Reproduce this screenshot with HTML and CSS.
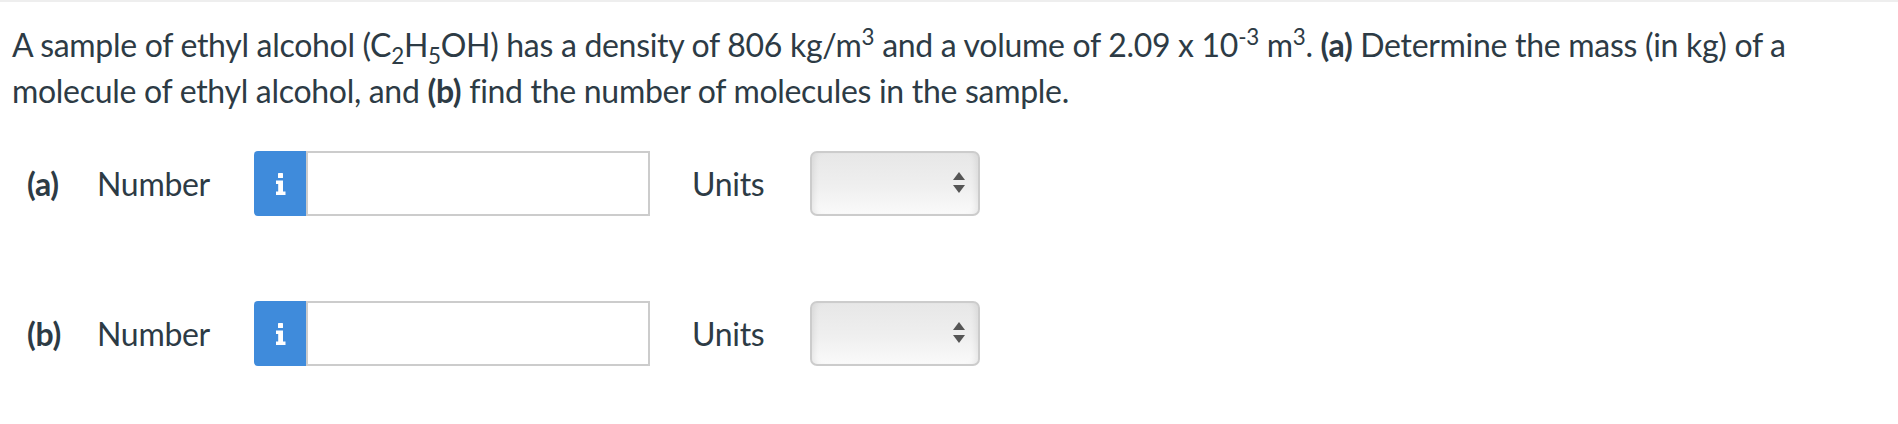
FILE: index.html
```html
<!DOCTYPE html>
<html>
<head>
<meta charset="utf-8">
<link rel="stylesheet" href="styles.css">
</head>
<body>
<div class="page">
  <p class="question">A sample of ethyl alcohol (C<sub>2</sub>H<sub>5</sub>OH) has a density of 806 kg/m<sup>3</sup> and a volume of 2.09 x 10<sup>-3</sup> m<sup>3</sup>. <b>(a)</b> Determine the mass (in kg) of a molecule of ethyl alcohol, and <b>(b)</b> find the number of molecules in the sample.</p>
  <div class="answers">
    <div class="row">
      <span class="part">(a)</span>
      <span class="label">Number</span>
      <div class="field">
        <span class="info"><svg width="11" height="22" viewBox="0 0 11 22"><rect x="3" y="0" width="5" height="5" rx="0.6" fill="#fff"/><path d="M1 7.5h7v11h2.5V22H1v-3.5h2.2v-7.5H1z" fill="#fff"/></svg></span>
        <input class="num" type="text">
      </div>
      <span class="units">Units</span>
      <div class="select"><span class="arrows"><svg width="12" height="24" viewBox="0 0 12 24"><path d="M6 0L12 8H0z" fill="#555"/><path d="M0 13h12L6 21z" fill="#555"/></svg></span></div>
    </div>
    <div class="row">
      <span class="part">(b)</span>
      <span class="label">Number</span>
      <div class="field">
        <span class="info"><svg width="11" height="22" viewBox="0 0 11 22"><rect x="3" y="0" width="5" height="5" rx="0.6" fill="#fff"/><path d="M1 7.5h7v11h2.5V22H1v-3.5h2.2v-7.5H1z" fill="#fff"/></svg></span>
        <input class="num" type="text">
      </div>
      <span class="units">Units</span>
      <div class="select"><span class="arrows"><svg width="12" height="24" viewBox="0 0 12 24"><path d="M6 0L12 8H0z" fill="#555"/><path d="M0 13h12L6 21z" fill="#555"/></svg></span></div>
    </div>
  </div>
</div>
</body>
</html>
```
FILE: styles.css
```css
html, body {
  margin: 0;
  padding: 0;
  background: #fff;
}
body {
  font-family: Lato, "Open Sans", sans-serif;
  color: #2d3b45;
}
.page {
  border-top: 2px solid #eeeeee;
  padding: 0 12px;
}
.question {
  margin: 0;
  padding-top: 20px;
  font-size: 32px;
  line-height: 46px;
  letter-spacing: -0.3px;
}
.question sub, .question sup {
  font-size: 0.7em;
  line-height: 0;
}
.answers {
  padding-top: 37px;
  display: flex;
  flex-direction: column;
  gap: 85px;
}
.row {
  display: flex;
  align-items: center;
  height: 65px;
  font-size: 32px;
  letter-spacing: -0.3px;
}
.part {
  margin-left: 15px;
  width: 70px;
  font-weight: 700;
}
.label {
  width: 157px;
}
.field {
  display: flex;
  height: 65px;
}
.info {
  width: 52px;
  height: 65px;
  background: #3f8bdb;
  border-radius: 4px 0 0 4px;
  display: flex;
  align-items: center;
  justify-content: center;
}
.info svg { display: block; }
.num {
  box-sizing: border-box;
  width: 344px;
  height: 65px;
  margin: 0;
  border: 2px solid #cccccc;
  background: #fff;
  padding: 0 8px;
}
.units {
  margin-left: 42px;
  width: 118px;
}
.select {
  box-sizing: border-box;
  width: 170px;
  height: 65px;
  border: 2px solid #cccccc;
  border-radius: 7px;
  background: linear-gradient(to bottom, #e7e7e7 0%, #efefef 55%, #fafafa 100%);
  box-shadow: inset 6px 0 6px -4px rgba(0,0,0,0.08), inset -6px 0 6px -4px rgba(0,0,0,0.08);
  display: flex;
  align-items: center;
  justify-content: flex-end;
  padding-right: 13px;
}
.arrows svg { display: block; }
```
